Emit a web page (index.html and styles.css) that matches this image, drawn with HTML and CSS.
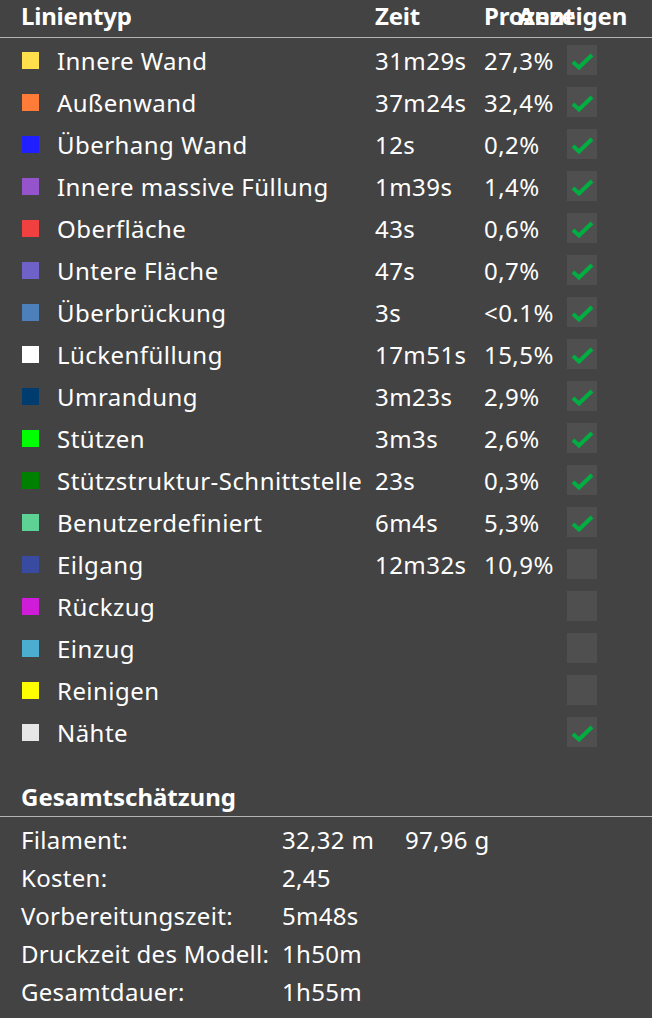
FILE: index.html
```html
<!DOCTYPE html>
<html lang="de">
<head>
<meta charset="utf-8">
<link rel="stylesheet" href="styles.css">
</head>
<body>
<div class="panel">
  <div class="head">
    <span>Linientyp</span>
    <span>Zeit</span>
    <span>Prozent</span>
    <span>Anzeigen</span>
  </div>
  <div class="rows">
    <div class="row"><i class="sw" style="background:#ffe04c"></i><span>Innere Wand</span><span>31m29s</span><span>27,3%</span><b class="cb"><svg viewBox="0 0 30 30"><path d="M6 17 L12 22.5 L25 10"/></svg></b></div>
    <div class="row"><i class="sw" style="background:#ff7c38"></i><span>Außenwand</span><span>37m24s</span><span>32,4%</span><b class="cb"><svg viewBox="0 0 30 30"><path d="M6 17 L12 22.5 L25 10"/></svg></b></div>
    <div class="row"><i class="sw" style="background:#1f1fff"></i><span>Überhang Wand</span><span>12s</span><span>0,2%</span><b class="cb"><svg viewBox="0 0 30 30"><path d="M6 17 L12 22.5 L25 10"/></svg></b></div>
    <div class="row"><i class="sw" style="background:#9654cc"></i><span>Innere massive Füllung</span><span>1m39s</span><span>1,4%</span><b class="cb"><svg viewBox="0 0 30 30"><path d="M6 17 L12 22.5 L25 10"/></svg></b></div>
    <div class="row"><i class="sw" style="background:#f04040"></i><span>Oberfläche</span><span>43s</span><span>0,6%</span><b class="cb"><svg viewBox="0 0 30 30"><path d="M6 17 L12 22.5 L25 10"/></svg></b></div>
    <div class="row"><i class="sw" style="background:#6e61c8"></i><span>Untere Fläche</span><span>47s</span><span>0,7%</span><b class="cb"><svg viewBox="0 0 30 30"><path d="M6 17 L12 22.5 L25 10"/></svg></b></div>
    <div class="row"><i class="sw" style="background:#4d80ba"></i><span>Überbrückung</span><span>3s</span><span>&lt;0.1%</span><b class="cb"><svg viewBox="0 0 30 30"><path d="M6 17 L12 22.5 L25 10"/></svg></b></div>
    <div class="row"><i class="sw" style="background:#ffffff"></i><span>Lückenfüllung</span><span>17m51s</span><span>15,5%</span><b class="cb"><svg viewBox="0 0 30 30"><path d="M6 17 L12 22.5 L25 10"/></svg></b></div>
    <div class="row"><i class="sw" style="background:#003c6e"></i><span>Umrandung</span><span>3m23s</span><span>2,9%</span><b class="cb"><svg viewBox="0 0 30 30"><path d="M6 17 L12 22.5 L25 10"/></svg></b></div>
    <div class="row"><i class="sw" style="background:#00ff00"></i><span>Stützen</span><span>3m3s</span><span>2,6%</span><b class="cb"><svg viewBox="0 0 30 30"><path d="M6 17 L12 22.5 L25 10"/></svg></b></div>
    <div class="row"><i class="sw" style="background:#008000"></i><span>Stützstruktur-Schnittstelle</span><span>23s</span><span>0,3%</span><b class="cb"><svg viewBox="0 0 30 30"><path d="M6 17 L12 22.5 L25 10"/></svg></b></div>
    <div class="row"><i class="sw" style="background:#5ed194"></i><span>Benutzerdefiniert</span><span>6m4s</span><span>5,3%</span><b class="cb"><svg viewBox="0 0 30 30"><path d="M6 17 L12 22.5 L25 10"/></svg></b></div>
    <div class="row"><i class="sw" style="background:#384ba0"></i><span>Eilgang</span><span>12m32s</span><span>10,9%</span><b class="cb"></b></div>
    <div class="row"><i class="sw" style="background:#ce1cd9"></i><span>Rückzug</span><span></span><span></span><b class="cb"></b></div>
    <div class="row"><i class="sw" style="background:#4baed0"></i><span>Einzug</span><span></span><span></span><b class="cb"></b></div>
    <div class="row"><i class="sw" style="background:#ffff00"></i><span>Reinigen</span><span></span><span></span><b class="cb"></b></div>
    <div class="row"><i class="sw" style="background:#e6e6e6"></i><span>Nähte</span><span></span><span></span><b class="cb"><svg viewBox="0 0 30 30"><path d="M6 17 L12 22.5 L25 10"/></svg></b></div>
  </div>
  <div class="total-head">Gesamtschätzung</div>
  <div class="totals">
    <div class="trow"><span>Filament:</span><span>32,32 m</span><span>97,96 g</span></div>
    <div class="trow"><span>Kosten:</span><span>2,45</span><span></span></div>
    <div class="trow"><span>Vorbereitungszeit:</span><span>5m48s</span><span></span></div>
    <div class="trow"><span>Druckzeit des Modell:</span><span>1h50m</span><span></span></div>
    <div class="trow"><span>Gesamtdauer:</span><span>1h55m</span><span></span></div>
  </div>
</div>
</body>
</html>
```
FILE: styles.css
```css
html, body {
  margin: 0;
  padding: 0;
  background: #434343;
}
body {
  width: 652px;
  height: 1018px;
  overflow: hidden;
  color: #ffffff;
  font-family: "Noto Sans", "Open Sans", sans-serif;
  font-size: 24px;
}
.panel {
  display: flex;
  flex-direction: column;
}
.head {
  height: 37px;
  border-bottom: 1.5px solid #b4b4b4;
  display: grid;
  grid-template-columns: 354px 109px 34px 1fr;
  padding-left: 21px;
  align-items: start;
  font-weight: 700;
  white-space: nowrap;
  line-height: 31px;
  letter-spacing: -0.2px;
}
.rows {
  padding-top: 1px;
}
.row {
  height: 42px;
  display: grid;
  grid-template-columns: 35px 318px 109px 83px 30px;
  padding-left: 22px;
  align-items: center;
  white-space: nowrap;
  letter-spacing: 0.45px;
}
.sw {
  display: block;
  width: 17px;
  height: 17px;
}
.cb {
  display: block;
  width: 30px;
  height: 30px;
  background: #4f4f4f;
}
.cb svg {
  display: block;
  width: 30px;
  height: 30px;
  fill: none;
  stroke: #00ae42;
  stroke-width: 4;
  stroke-linecap: butt;
  stroke-linejoin: miter;
}
.total-head {
  margin-top: 23px;
  height: 40px;
  padding-left: 21px;
  font-weight: 700;
  display: flex;
  align-items: center;
  border-bottom: 1.5px solid #b4b4b4;
}
.totals {
  padding-top: 4px;
}
.trow {
  height: 37.8px;
  display: grid;
  grid-template-columns: 261px 123px 1fr;
  padding-left: 21px;
  align-items: center;
  white-space: nowrap;
  letter-spacing: 0.3px;
}
```
